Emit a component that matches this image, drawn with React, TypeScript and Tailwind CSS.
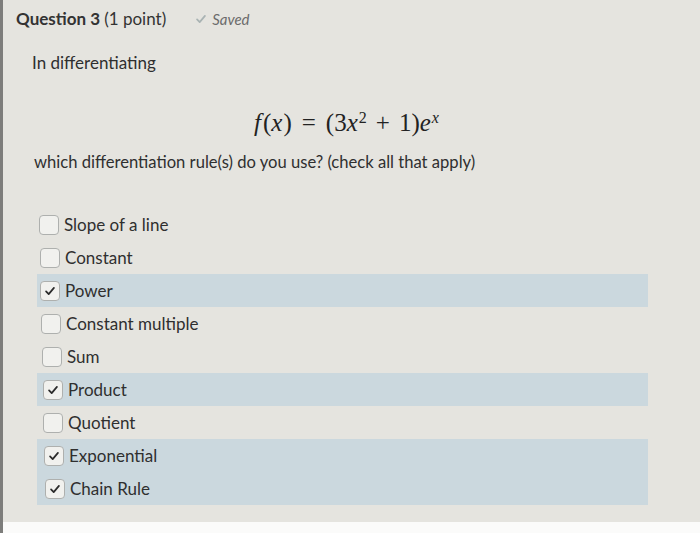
import React from "react";

interface Option {
  label: string;
  checked: boolean;
}

const options: Option[] = [
  { label: "Slope of a line", checked: false },
  { label: "Constant", checked: false },
  { label: "Power", checked: true },
  { label: "Constant multiple", checked: false },
  { label: "Sum", checked: false },
  { label: "Product", checked: true },
  { label: "Quotient", checked: false },
  { label: "Exponential", checked: true },
  { label: "Chain Rule", checked: true },
];

const Check: React.FC<{ className?: string }> = ({ className }) => (
  <svg viewBox="0 0 16 16" className={className} fill="none">
    <path d="M3.5 8.5 L6.5 11.5 L12.5 4.5" stroke="currentColor" strokeWidth="2" strokeLinecap="round" strokeLinejoin="round" />
  </svg>
);

const App: React.FC = () => {
  return (
    <div
      className="flex h-[533px] w-[700px] flex-col overflow-hidden border-l-[3px] border-[#7d7d7b] bg-[#e5e4df] text-[#2f2f2f]"
      style={{ fontFamily: "Lato, 'Open Sans', sans-serif" }}
    >
      <div className="flex-1">
        {/* Header */}
        <div className="flex items-center pl-[13px] pt-[7px]">
          <h2 className="text-[17px] leading-6 font-bold text-[#333]">
            Question 3 <span className="font-normal">(1 point)</span>
          </h2>
          <span className="ml-[28px] flex items-center gap-[4px] text-[15px] italic text-[#6b6b6b]">
            <Check className="h-[14px] w-[14px] text-[#a9b3b3]" />
            Saved
          </span>
        </div>

        {/* Question body */}
        <p className="ml-[29px] mt-[20px] text-[17px] leading-6">In differentiating</p>

        <div
          className="mt-[34px] flex justify-center text-[25px] leading-7 text-[#222]"
          style={{ fontFamily: "'Liberation Serif', 'DejaVu Serif', serif" }}
        >
          <span className="ml-[-10px]">
            <i className="pr-[2px]">f</i>(<i className="pr-[1px]">x</i>)<span className="mx-[10px]">=</span>(3<i>x</i>
            <sup className="ml-[1px] text-[16px]">2</sup>
            <span className="mx-[9px]">+</span>1)<i>e</i>
            <sup className="ml-[1px] text-[16px]"><i>x</i></sup>
          </span>
        </div>

        <p className="ml-[31px] mt-[13px] text-[16.6px] leading-6">
          which differentiation rule(s) do you use? (check all that apply)
        </p>

        {/* Options */}
        <ul className="ml-[34px] mr-[52px] mt-[34px]">
          {options.map((opt, i) => (
            <li
              key={i}
              className={`flex h-[33px] items-center ${opt.checked ? "bg-[#cbd8de]" : ""}`}
            >
              <span
                className="flex h-[20px] w-[20px] items-center justify-center rounded-[4px] border border-[#aeb0ae] bg-[#f1f1ee]"
                style={{ marginLeft: 2 + Math.round(i * 0.7) }}
              >
                {opt.checked && <Check className="h-[14px] w-[14px] text-[#2b2b2b]" />}
              </span>
              <span className="ml-[5px] text-[17px] leading-6">{opt.label}</span>
            </li>
          ))}
        </ul>
      </div>
      <div className="h-[11px] bg-[#fbfbfa]" />
    </div>
  );
};

export default App;
